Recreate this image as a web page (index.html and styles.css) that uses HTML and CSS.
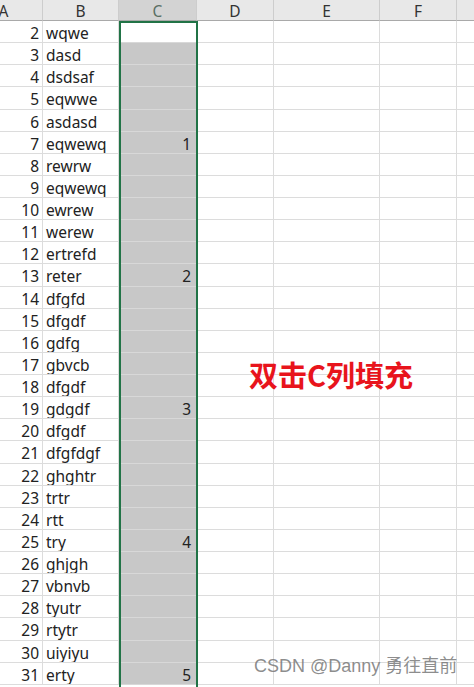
FILE: index.html
```html
<!DOCTYPE html>
<html>
<head>
<meta charset="utf-8">
<link rel="stylesheet" href="styles.css">
</head>
<body>
<div class="sheet">
  <div class="grid">
    <div class="h">A</div><div class="h">B</div><div class="h hc">C</div><div class="h">D</div><div class="h">E</div><div class="h">F</div><div class="h"></div>
    <div class="n">2</div><div class="t">wqwe</div><div class="c act"></div><div></div><div></div><div></div><div></div>
    <div class="n">3</div><div class="t">dasd</div><div class="c"></div><div></div><div></div><div></div><div></div>
    <div class="n">4</div><div class="t">dsdsaf</div><div class="c"></div><div></div><div></div><div></div><div></div>
    <div class="n">5</div><div class="t">eqwwe</div><div class="c"></div><div></div><div></div><div></div><div></div>
    <div class="n">6</div><div class="t">asdasd</div><div class="c"></div><div></div><div></div><div></div><div></div>
    <div class="n">7</div><div class="t">eqwewq</div><div class="c">1</div><div></div><div></div><div></div><div></div>
    <div class="n">8</div><div class="t">rewrw</div><div class="c"></div><div></div><div></div><div></div><div></div>
    <div class="n">9</div><div class="t">eqwewq</div><div class="c"></div><div></div><div></div><div></div><div></div>
    <div class="n">10</div><div class="t">ewrew</div><div class="c"></div><div></div><div></div><div></div><div></div>
    <div class="n">11</div><div class="t">werew</div><div class="c"></div><div></div><div></div><div></div><div></div>
    <div class="n">12</div><div class="t">ertrefd</div><div class="c"></div><div></div><div></div><div></div><div></div>
    <div class="n">13</div><div class="t">reter</div><div class="c">2</div><div></div><div></div><div></div><div></div>
    <div class="n">14</div><div class="t">dfgfd</div><div class="c"></div><div></div><div></div><div></div><div></div>
    <div class="n">15</div><div class="t">dfgdf</div><div class="c"></div><div></div><div></div><div></div><div></div>
    <div class="n">16</div><div class="t">gdfg</div><div class="c"></div><div></div><div></div><div></div><div></div>
    <div class="n">17</div><div class="t">gbvcb</div><div class="c"></div><div></div><div></div><div></div><div></div>
    <div class="n">18</div><div class="t">dfgdf</div><div class="c"></div><div></div><div></div><div></div><div></div>
    <div class="n">19</div><div class="t">gdgdf</div><div class="c">3</div><div></div><div></div><div></div><div></div>
    <div class="n">20</div><div class="t">dfgdf</div><div class="c"></div><div></div><div></div><div></div><div></div>
    <div class="n">21</div><div class="t">dfgfdgf</div><div class="c"></div><div></div><div></div><div></div><div></div>
    <div class="n">22</div><div class="t">ghghtr</div><div class="c"></div><div></div><div></div><div></div><div></div>
    <div class="n">23</div><div class="t">trtr</div><div class="c"></div><div></div><div></div><div></div><div></div>
    <div class="n">24</div><div class="t">rtt</div><div class="c"></div><div></div><div></div><div></div><div></div>
    <div class="n">25</div><div class="t">try</div><div class="c">4</div><div></div><div></div><div></div><div></div>
    <div class="n">26</div><div class="t">ghjgh</div><div class="c"></div><div></div><div></div><div></div><div></div>
    <div class="n">27</div><div class="t">vbnvb</div><div class="c"></div><div></div><div></div><div></div><div></div>
    <div class="n">28</div><div class="t">tyutr</div><div class="c"></div><div></div><div></div><div></div><div></div>
    <div class="n">29</div><div class="t">rtytr</div><div class="c"></div><div></div><div></div><div></div><div></div>
    <div class="n">30</div><div class="t">uiyiyu</div><div class="c"></div><div></div><div></div><div></div><div></div>
    <div class="n">31</div><div class="t">erty</div><div class="c">5</div><div></div><div></div><div></div><div></div>
  </div>
  <div class="selection"></div>
  <div class="note">双击C列填充</div>
  <div class="mark">CSDN @Danny 勇往直前</div>
</div>
</body>
</html>
```

FILE: styles.css
```css
html, body {
  margin: 0;
  padding: 0;
  background: #ffffff;
  overflow: hidden;
}

.sheet {
  position: relative;
  width: 474px;
  height: 687px;
  overflow: hidden;
  font-family: "Noto Sans", "Noto Sans CJK SC", sans-serif;
  font-size: 15.5px;
  color: #222222;
}

.grid {
  display: grid;
  grid-template-columns: 78px 76px 78px 77px 106px 77px 60px;
  grid-template-rows: 21px;
  grid-auto-rows: 22.13px;
  margin-left: -35px;
}

.grid > div {
  box-sizing: border-box;
  border-right: 1px solid #dcdcdc;
  border-bottom: 1px solid #dcdcdc;
  line-height: 24px;
  white-space: nowrap;
  overflow: hidden;
}

.grid > .h {
  background: #e8e8e8;
  border-right: 1px solid #cdcdcd;
  border-bottom: 1px solid #a9a9a9;
  text-align: center;
  color: #333333;
  line-height: 22px;
}

.grid > .hc {
  background: #d3d3d3;
  color: #5a6f64;
}

.n {
  text-align: right;
  padding-right: 3px;
}

.t {
  padding-left: 3px;
}

.grid > .c {
  background: #c8c8c8;
  text-align: right;
  padding-right: 5px;
  border-bottom-color: #d8d8d8;
}

.grid > .c.act {
  background: #ffffff;
}

.selection {
  position: absolute;
  left: 119px;
  top: 21px;
  width: 79px;
  height: 700px;
  box-sizing: border-box;
  border-left: 2px solid #217346;
  border-right: 2px solid #217346;
  border-top: 2px solid #217346;
}

.note {
  position: absolute;
  left: 249px;
  top: 355px;
  font-family: "Noto Sans CJK SC", sans-serif;
  font-weight: 700;
  font-size: 29px;
  line-height: 38px;
  color: #e8141c;
}

.mark {
  position: absolute;
  left: 254px;
  top: 654px;
  font-family: "Liberation Sans", "Noto Sans CJK SC", sans-serif;
  font-size: 18px;
  line-height: 24px;
  color: rgba(120, 120, 120, 0.85);
}
```
